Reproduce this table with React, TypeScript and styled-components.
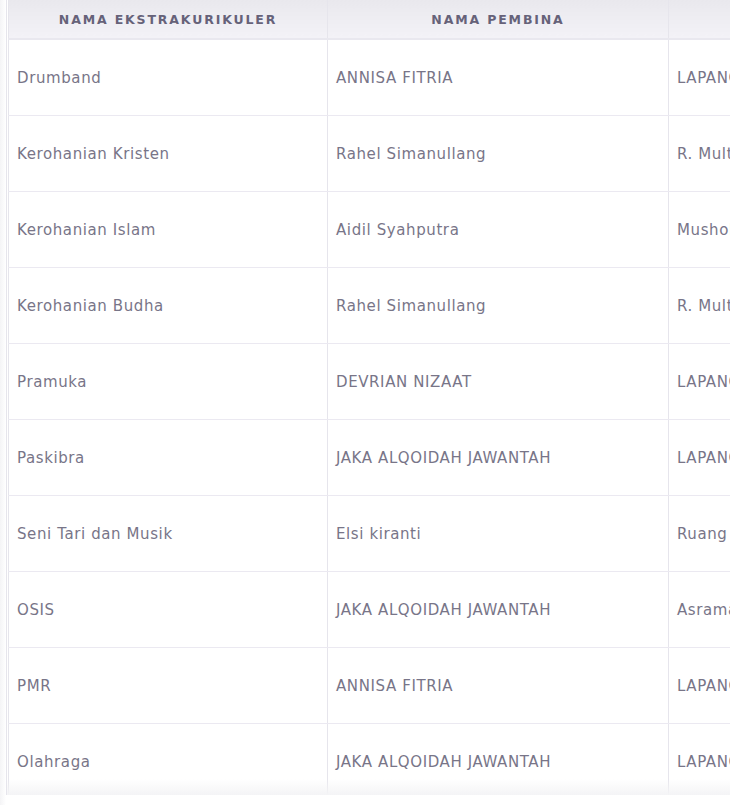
import { ReactElement } from 'react';
import styled, { createGlobalStyle } from 'styled-components';

/** Data */
interface Row {
    name: string;
    coach: string;
    place: string;
}

const rows: Row[] = [
    { name: 'Drumband', coach: 'ANNISA FITRIA', place: 'LAPANGAN' },
    { name: 'Kerohanian Kristen', coach: 'Rahel Simanullang', place: 'R. Multimedia' },
    { name: 'Kerohanian Islam', coach: 'Aidil Syahputra', place: 'Mushola' },
    { name: 'Kerohanian Budha', coach: 'Rahel Simanullang', place: 'R. Multimedia' },
    { name: 'Pramuka', coach: 'DEVRIAN NIZAAT', place: 'LAPANGAN' },
    { name: 'Paskibra', coach: 'JAKA ALQOIDAH JAWANTAH', place: 'LAPANGAN' },
    { name: 'Seni Tari dan Musik', coach: 'Elsi kiranti', place: 'Ruang Musik' },
    { name: 'OSIS', coach: 'JAKA ALQOIDAH JAWANTAH', place: 'Asrama' },
    { name: 'PMR', coach: 'ANNISA FITRIA', place: 'LAPANGAN' },
    { name: 'Olahraga', coach: 'JAKA ALQOIDAH JAWANTAH', place: 'LAPANGAN' },
];

/** Styled Components */
const GlobalStyle = createGlobalStyle`
    html, body {
        margin: 0;
        padding: 0;
        background: #ffffff;
        overflow: hidden;
    }
    body {
        font-family: 'DejaVu Sans', 'Noto Sans', sans-serif;
    }
`;

const Page = styled.div`
    width: 730px;
    height: 805px;
    overflow: hidden;
    background: linear-gradient(90deg, #f4f4f6 0px, #ffffff 6px);
`;

const Card = styled.div`
    position: relative;
    margin-left: 6px;
    height: 795px;
    overflow: hidden;
    border-left: 1px solid #e6e5ec;
    padding-left: 1px;
    background: #ffffff;

    &::after {
        content: '';
        position: absolute;
        left: 0;
        right: 0;
        bottom: 0;
        height: 16px;
        background: linear-gradient(180deg, rgba(245, 245, 247, 0), #f4f4f6);
        pointer-events: none;
    }
`;

const Table = styled.table`
    border-collapse: collapse;
    table-layout: fixed;
    width: 1000px;
    border-left: 1px solid #e6e5ec;
`;

const Col = styled.col<{ width: number }>`
    width: ${(props) => props.width}px;
`;

const Head = styled.th`
    height: 38px;
    padding: 0 10px;
    background: linear-gradient(180deg, #e9e8ed 0%, #f3f2f7 100%);
    border-bottom: 2px solid #e9e8ef;
    border-right: 1px solid #e6e5ec;
    color: #666279;
    font-size: 12.5px;
    font-weight: 700;
    letter-spacing: 1.85px;
    text-transform: uppercase;
    text-align: center;
    vertical-align: middle;
    white-space: nowrap;
`;

const Cell = styled.td`
    height: 75px;
    padding: 0 8px;
    border-bottom: 1px solid #ebe9f1;
    border-right: 1px solid #e6e5ec;
    color: #787588;
    font-size: 15px;
    font-weight: 400;
    letter-spacing: 0.6px;
    white-space: nowrap;
    overflow: hidden;
    vertical-align: middle;
`;

/**
 * Ekstrakurikuler Table
 */
const App = (): ReactElement => {
    return (
        <>
            <GlobalStyle />
            <Page>
                <Card>
                    <Table>
                        <colgroup>
                            <Col width={319} />
                            <Col width={341} />
                            <Col width={340} />
                        </colgroup>
                        <thead>
                            <tr>
                                <Head>Nama Ekstrakurikuler</Head>
                                <Head>Nama Pembina</Head>
                                <Head>Tempat</Head>
                            </tr>
                        </thead>
                        <tbody>
                            {rows.map((row) => (
                                <tr key={row.name}>
                                    <Cell>{row.name}</Cell>
                                    <Cell>{row.coach}</Cell>
                                    <Cell>{row.place}</Cell>
                                </tr>
                            ))}
                        </tbody>
                    </Table>
                </Card>
            </Page>
        </>
    );
};

export default App;
